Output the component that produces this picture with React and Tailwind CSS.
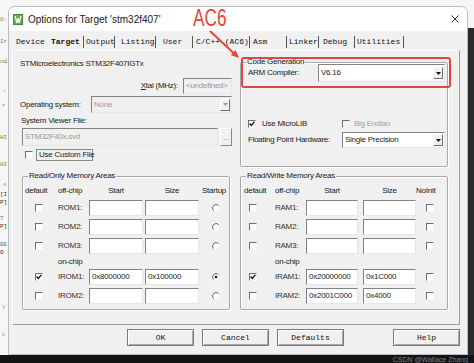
import React from 'react';

const sans = "font-['Liberation_Sans',Arial,sans-serif]";
const mono = "font-['Liberation_Mono','Courier_New',monospace]";

function Check({ checked, disabled }) {
  return (
    <span
      className={`inline-flex w-[8px] h-[8px] shrink-0 items-center justify-center border border-t-[#6e6e6e] border-l-[#6e6e6e] border-b-[#f4f4f4] border-r-[#f4f4f4] ${
        disabled ? 'bg-[#f3f3f3]' : 'bg-white'
      }`}
    >
      {checked && (
        <svg width="6" height="6" viewBox="0 0 6 6">
          <path d="M0.6 2.6 L2.3 4.4 L5.4 0.9" stroke="#111" strokeWidth="1.4" fill="none" />
        </svg>
      )}
    </span>
  );
}

function Radio({ on }) {
  return (
    <svg width="8" height="8" viewBox="0 0 8 8" className="shrink-0">
      <circle cx="4" cy="4" r="3.4" fill="#fafafa" />
      <path d="M6.6 1.6 A3.4 3.4 0 0 0 1.6 6.6" stroke="#6a6a6a" strokeWidth="1" fill="none" />
      {on && <circle cx="4" cy="4" r="1.3" fill="#111" />}
    </svg>
  );
}

function Box({ className = '', value, gray, children }) {
  return (
    <div
      className={`flex items-center shrink-0 border border-t-[#828282] border-l-[#828282] border-b-[#e6e6e6] border-r-[#e6e6e6] pl-[2px] whitespace-nowrap overflow-hidden ${
        gray ? 'bg-[#f0f0f0] text-[#9a9a9a]' : 'bg-white text-[#222]'
      } ${className}`}
    >
      {value}
      {children}
    </div>
  );
}

function DropBtn({ gray }) {
  return (
    <span className="ml-auto mr-[1px] w-[10px] h-[12px] shrink-0 flex items-center justify-center bg-[#f0f0f0] border border-t-white border-l-white border-b-[#6f6f6f] border-r-[#6f6f6f]">
      <svg width="5" height="3" viewBox="0 0 5 3">
        <path d="M0 0h5L2.5 3z" fill={gray ? '#9a9a9a' : '#111'} />
      </svg>
    </span>
  );
}

function Btn({ label, className = '' }) {
  return (
    <div
      className={`h-[17px] flex items-center justify-center border border-[#7a7a7a] shadow-[inset_1px_1px_0_#fff,inset_-1px_-1px_0_#a8a8a8] bg-[#f0f0f0] ${mono} text-[8px] text-[#111] ${className}`}
    >
      {label}
    </div>
  );
}

const tabs = [
  { label: 'Device', cls: 'w-[36px] pl-[4px]' },
  { label: 'Target', cls: 'w-[36px] pl-[3px] font-bold border-r border-[#555]' },
  { label: 'Output', cls: 'w-[31px] pl-[2px] border-r border-[#555]' },
  { label: 'Listing', cls: 'w-[41px] pl-[6px] border-r border-[#555]' },
  { label: 'User', cls: 'w-[37px] pl-[7px] border-r border-[#555]' },
  { label: 'C/C++ (AC6)', cls: 'w-[57px] pl-[3px] border-r border-[#555]' },
  { label: 'Asm', cls: 'w-[37px] pl-[3px] border-r border-[#555]' },
  { label: 'Linker', cls: 'w-[32px] pl-[2px] border-r border-[#555]' },
  { label: 'Debug', cls: 'w-[36px] pl-[4px] border-r border-[#555]' },
  { label: 'Utilities', cls: 'w-[49px] pl-[2px] border-r border-[#555]' },
];

const romRows = [
  { name: 'ROM1:', start: '', size: '' },
  { name: 'ROM2:', start: '', size: '' },
  { name: 'ROM3:', start: '', size: '' },
];

const ramRows = [
  { name: 'RAM1:', start: '', size: '' },
  { name: 'RAM2:', start: '', size: '' },
  { name: 'RAM3:', start: '', size: '' },
];

function RomRow({ row, checked, on, className = '' }) {
  return (
    <div className={`h-[16px] flex items-center ${className}`}>
      <div className="w-[35px] shrink-0 pl-[12px] flex">
        <Check checked={checked} />
      </div>
      <span className="w-[31px] shrink-0 text-[#333]">{row.name}</span>
      <Box className="w-[54px] h-[16px]" value={row.start} />
      <Box className="w-[54px] h-[16px] ml-[2px]" value={row.size} />
      <div className="ml-[13px] flex">
        <Radio on={on} />
      </div>
    </div>
  );
}

function RamRow({ row, checked, className = '' }) {
  return (
    <div className={`h-[16px] flex items-center ${className}`}>
      <div className="w-[34px] shrink-0 pl-[8px] flex">
        <Check checked={checked} />
      </div>
      <span className="w-[31px] shrink-0 text-[#333]">{row.name}</span>
      <Box className="w-[52px] h-[16px]" value={row.start} />
      <Box className="w-[53px] h-[16px] ml-[5px]" value={row.size} />
      <div className="ml-[10px] flex">
        <Check />
      </div>
    </div>
  );
}

function Group({ title, className = '', children }) {
  return (
    <div
      className={`flex flex-col border border-[#a9a9a9] rounded-[2px] shadow-[1px_1px_0_#fff,inset_1px_1px_0_#fff] ${className}`}
    >
      <span className="-mt-[6px] ml-[5px] w-fit px-[1px] h-[10px] leading-[10px] bg-[#f0f0f0] text-[#222]">
        {title}
      </span>
      {children}
    </div>
  );
}

// bits of the code editor showing behind the dialog
function EditorStrip() {
  return (
    <div className={`w-[8px] shrink-0 bg-[#f6f6f6] flex flex-col overflow-hidden ${mono} text-[6px] leading-[8px] whitespace-nowrap`}>
      <span className="mt-[16px] text-[#5b8f52]">0:</span>
      <span className="mt-[14px] text-[#5b8f52]">Ir</span>
      <span className="mt-[12px] text-[#5b8f52]">nd</span>
      <span className="mt-[20px] pl-[3px] text-[#888]">,</span>
      <span className="mt-[8px] pl-[2px] text-[#999]">r</span>
      <span className="mt-[24px] text-[#4e9a4e]">HI</span>
      <span className="mt-[19px] text-[#4e9a4e]">HI</span>
      <span className="mt-[12px] pl-[3px] text-[#888]">s</span>
      <span className="mt-[2px] text-[#333]">[I</span>
      <span className="text-[#333]">P]</span>
      <span className="mt-[8px] text-[#4e9a4e]">T</span>
      <span className="text-[#333]">P]</span>
      <span className="mt-[10px] text-[#3e8f9a]">BE</span>
      <span className="text-[#333]">O</span>
      <span className="mt-[46px] pl-[2px] text-[#999]">y</span>
      <span className="mt-[20px] pl-[2px] text-[#999]">c</span>
    </div>
  );
}

export default function App() {
  return (
    <div className={`relative w-[474px] h-[363px] overflow-hidden bg-[#141414] flex flex-col ${sans}`}>
      <div className="h-[355px] flex shrink-0">
        <EditorStrip />
        <div className="w-[460px] shrink-0 flex flex-col bg-[#f6f6f6]">
          <div className="h-[6px] shrink-0" />
          {/* Dialog */}
          <div className="h-[349px] flex flex-col rounded-t-[7px] border border-[#bdbdbd] bg-[#f0f0f0] overflow-hidden">
            {/* Title bar */}
            <div className="h-[24px] shrink-0 bg-white flex items-center">
              <svg width="10" height="11" viewBox="0 0 10 11" className="ml-[4px]">
                <rect width="10" height="11" fill="#3d8a3d" />
                <rect x="1" y="1" width="8" height="9" fill="#5fae4f" />
                <path d="M2 2 L4 9 L5 4 L6 9 L8 2" stroke="#fff" strokeWidth="1.2" fill="none" />
              </svg>
              <span className="ml-[5px] text-[10px] text-[#1a1a1a]">Options for Target 'stm32f407'</span>
              <svg width="8" height="8" viewBox="0 0 8 8" className="ml-auto mr-[8px]">
                <path d="M0.5 0.5 L7.5 7.5 M7.5 0.5 L0.5 7.5" stroke="#333" strokeWidth="1" />
              </svg>
            </div>

            {/* Tabs */}
            <div className={`h-[19px] shrink-0 flex items-center pl-[3px] pt-[3px] ${mono} text-[8px] text-[#111]`}>
              {tabs.map((t) => (
                <span key={t.label} className={`h-[12px] leading-[12px] shrink-0 whitespace-nowrap ${t.cls}`}>
                  {t.label}
                </span>
              ))}
            </div>

            {/* Tab page */}
            <div className="ml-[3px] w-[448px] h-[275px] shrink-0 flex flex-col pl-[7px] pt-[4px] border border-t-[#fbfbfb] border-l-[#fbfbfb] border-r-[#9a9a9a] border-b-[#9a9a9a] text-[8px] tracking-[-0.25px] text-[#222]">
              <div className="h-[121px] shrink-0 grid grid-cols-[212px_208px] gap-x-[8px]">
                {/* left top */}
                <div className="flex flex-col">
                  <span className="mt-[4px] h-[10px] leading-[10px]">STMicroelectronics STM32F407IGTx</span>
                  <div className="mt-[9px] h-[16px] flex items-center justify-end">
                    <span className="mr-[5px]">
                      <span className="underline">X</span>tal (MHz):
                    </span>
                    <Box gray className="w-[49px] h-[16px]" value="<undefined>" />
                  </div>
                  <div className="mt-[2px] h-[17px] flex items-center">
                    <span className="w-[71px] shrink-0">Operating system:</span>
                    <Box gray className="w-[141px] h-[17px]" value="None">
                      <DropBtn gray />
                    </Box>
                  </div>
                  <span className="mt-[3px] h-[10px] leading-[10px] pl-[1px]">System Viewer File:</span>
                  <div className="mt-[2px] h-[18px] flex items-center">
                    <Box gray className="ml-[2px] w-[196px] h-[18px]" value="STM32F40x.svd" />
                    <div className="ml-[2px] w-[12px] h-[18px] flex items-end justify-center pb-[3px] border border-t-white border-l-white border-b-[#8a8a8a] border-r-[#8a8a8a] text-[#888] leading-none">
                      ...
                    </div>
                  </div>
                  <div className="mt-[3px] h-[12px] flex items-center">
                    <span className="ml-[5px] flex">
                      <Check />
                    </span>
                    <span className="ml-[3px] h-[12px] w-[57px] leading-[10px] px-[2px] border border-[#8a8a8a] whitespace-nowrap">
                      Use Custom File
                    </span>
                  </div>
                </div>

                {/* right top: code generation */}
                <div className="flex flex-col">
                  <Group title="Code Generation" className="mt-[7px] h-[105px]">
                    <div className="-mt-[3px] h-[18px] flex items-center pl-[7px]">
                      <span className="w-[70px] shrink-0">ARM Compiler:</span>
                      <Box className="w-[127px] h-[18px]" value="V6.16">
                        <DropBtn />
                      </Box>
                    </div>
                    <div className="mt-[36px] h-[12px] flex items-center pl-[7px]">
                      <div className="w-[94px] shrink-0 flex items-center">
                        <Check checked />
                        <span className="ml-[6px]">Use MicroLIB</span>
                      </div>
                      <Check disabled />
                      <span className="ml-[4px] text-[#a3a3a3]">Big Endian</span>
                    </div>
                    <div className="mt-[2px] h-[16px] flex items-center pl-[7px]">
                      <span className="w-[94px] shrink-0 whitespace-nowrap">Floating Point Hardware:</span>
                      <Box className="w-[103px] h-[16px]" value="Single Precision">
                        <DropBtn />
                      </Box>
                    </div>
                  </Group>
                </div>
              </div>

              {/* memory areas */}
              <div className="h-[134px] shrink-0 grid grid-cols-[212px_208px] gap-x-[8px]">
                <Group title="Read/Only Memory Areas" className="ml-[2px] w-[208px] h-[134px]">
                  <div className="mt-[5px] h-[9px] leading-[9px] flex">
                    <span className="w-[35px] shrink-0 pl-[2px]">default</span>
                    <span className="w-[31px] shrink-0">off-chip</span>
                    <span className="w-[54px] shrink-0 text-center">Start</span>
                    <span className="w-[54px] ml-[2px] shrink-0 text-center">Size</span>
                    <span className="ml-[3px]">Startup</span>
                  </div>
                  <RomRow row={romRows[0]} className="mt-[5px]" />
                  <RomRow row={romRows[1]} className="mt-[3px]" />
                  <RomRow row={romRows[2]} className="mt-[3px]" />
                  <span className="mt-[2px] h-[12px] leading-[12px] pl-[35px]">on-chip</span>
                  <RomRow row={{ name: 'IROM1:', start: '0x8000000', size: '0x100000' }} checked on className="mt-[1px]" />
                  <RomRow row={{ name: 'IROM2:', start: '', size: '' }} className="mt-[3px]" />
                </Group>

                <Group title="Read/Write Memory Areas" className="w-[208px] h-[134px]">
                  <div className="mt-[5px] h-[9px] leading-[9px] flex">
                    <span className="w-[34px] shrink-0 pl-[3px]">default</span>
                    <span className="w-[31px] shrink-0">off-chip</span>
                    <span className="w-[52px] shrink-0 text-center">Start</span>
                    <span className="w-[53px] ml-[5px] shrink-0 text-center">Size</span>
                    <span>NoInit</span>
                  </div>
                  <RamRow row={ramRows[0]} className="mt-[5px]" />
                  <RamRow row={ramRows[1]} className="mt-[3px]" />
                  <RamRow row={ramRows[2]} className="mt-[3px]" />
                  <span className="mt-[2px] h-[12px] leading-[12px] pl-[34px]">on-chip</span>
                  <RamRow row={{ name: 'IRAM1:', start: '0x20000000', size: '0x1C000' }} checked className="mt-[1px]" />
                  <RamRow row={{ name: 'IRAM2:', start: '0x2001C000', size: '0x4000' }} className="mt-[3px]" />
                </Group>
              </div>
            </div>

            {/* Buttons */}
            <div className="mt-[4px] h-[17px] shrink-0 flex pl-[118px]">
              <Btn label="OK" className="w-[67px]" />
              <Btn label="Cancel" className="w-[67px] ml-[8px]" />
              <Btn label="Defaults" className="w-[67px] ml-[8px]" />
              <Btn label="Help" className="w-[67px] ml-[49px]" />
            </div>
          </div>
        </div>
        <div className="w-[6px] shrink-0 flex flex-col">
          <div className="h-[28px] bg-[#f6f6f6]" />
          <div className="flex-1 bg-[#2a2a2a]" />
        </div>
      </div>
      <div className="h-[8px] shrink-0 flex justify-end items-center pr-[6px] text-[7px] leading-none text-[#7c7c7c]">
        CSDN @Wallace Zhang
      </div>

      {/* annotations drawn over the screenshot */}
      <span className="absolute left-[193px] top-[7px] text-[23px] leading-[23px] text-[#e5463a] scale-x-75 origin-left">
        AC6
      </span>
      <svg width="40" height="38" viewBox="0 0 40 38" className="absolute left-[205px] top-[26px]">
        <path d="M5 5 L29 27.5" stroke="#e5463a" strokeWidth="2" />
        <path d="M34 32 L25.8 29.1 L30.5 24 Z" fill="#e5463a" />
      </svg>
      <div className="absolute left-[241px] top-[57px] w-[210px] h-[31px] border-2 border-[#e0473b] rounded-[3px]" />
    </div>
  );
}
